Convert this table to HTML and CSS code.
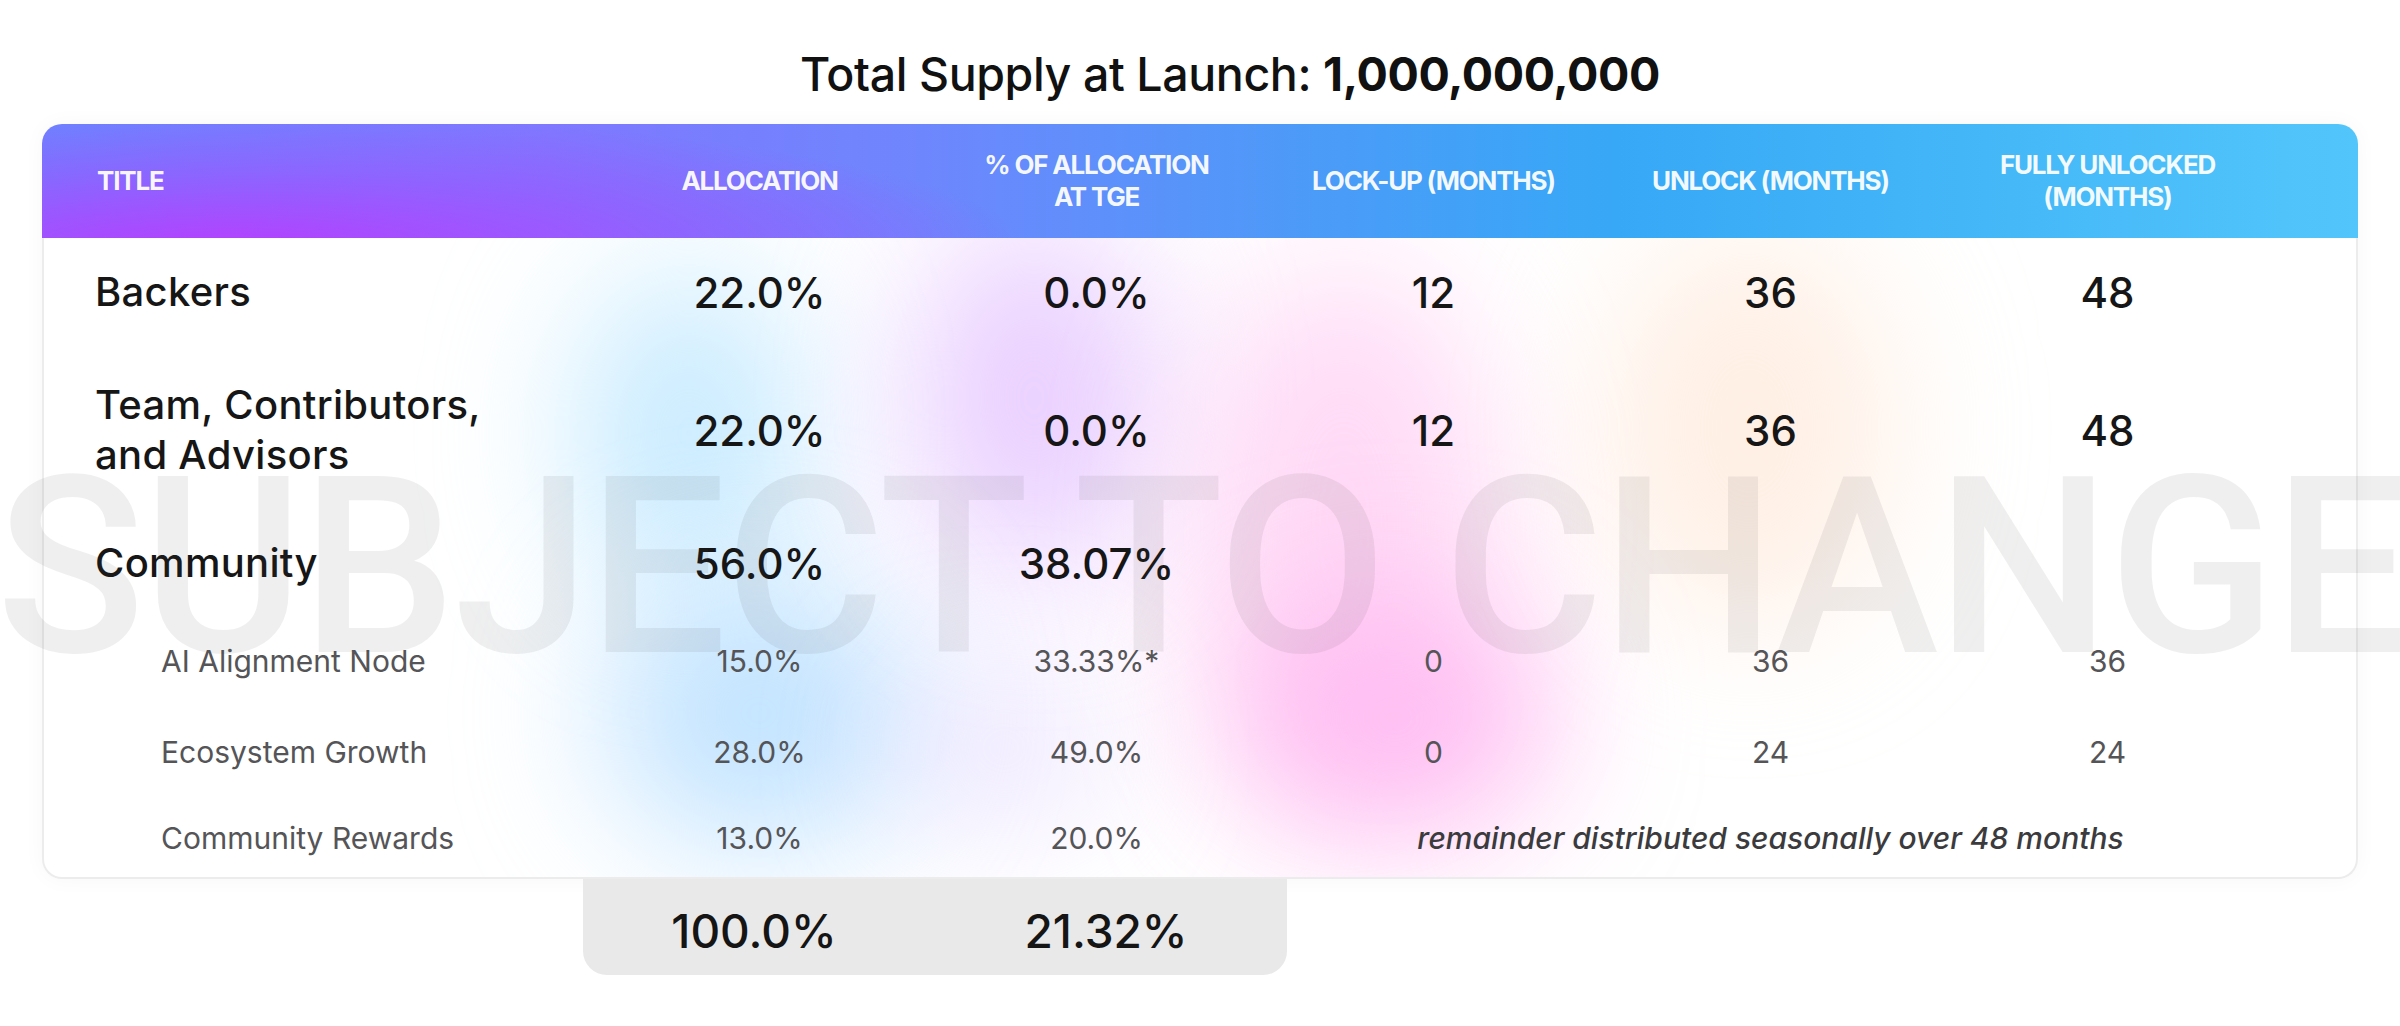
FILE: index.html
```html
<!DOCTYPE html>
<html lang="en">
<head>
<meta charset="utf-8">
<title>Total Supply at Launch</title>
<link rel="stylesheet" href="styles.css">
</head>
<body>
<div class="page">
  <h1 class="headline">Total Supply at Launch: <strong>1,000,000,000</strong></h1>

  <div class="card">
    <div class="row head">
      <div class="cell first">TITLE</div>
      <div class="cell">ALLOCATION</div>
      <div class="cell">% OF ALLOCATION<br>AT TGE</div>
      <div class="cell">LOCK-UP (MONTHS)</div>
      <div class="cell">UNLOCK (MONTHS)</div>
      <div class="cell">FULLY UNLOCKED<br>(MONTHS)</div>
    </div>

    <div class="tbody">
      <div class="blobs" aria-hidden="true">
        <span class="blob b-blue1"></span>
        <span class="blob b-blue2"></span>
        <span class="blob b-purple1"></span>
        <span class="blob b-purple2"></span>
        <span class="blob b-pink1"></span>
        <span class="blob b-pink2"></span>
        <span class="blob b-peach1"></span>
      </div>

      <div class="row main r-backers">
        <div class="cell first">Backers</div>
        <div class="cell">22.0%</div>
        <div class="cell">0.0%</div>
        <div class="cell">12</div>
        <div class="cell">36</div>
        <div class="cell">48</div>
      </div>
      <div class="row main r-team">
        <div class="cell first">Team, Contributors,<br>and Advisors</div>
        <div class="cell">22.0%</div>
        <div class="cell">0.0%</div>
        <div class="cell">12</div>
        <div class="cell">36</div>
        <div class="cell">48</div>
      </div>
      <div class="row main r-community">
        <div class="cell first">Community</div>
        <div class="cell">56.0%</div>
        <div class="cell">38.07%</div>
        <div class="cell"></div>
        <div class="cell"></div>
        <div class="cell"></div>
      </div>
      <div class="row sub r-ai">
        <div class="cell first">AI Alignment Node</div>
        <div class="cell">15.0%</div>
        <div class="cell">33.33%*</div>
        <div class="cell">0</div>
        <div class="cell">36</div>
        <div class="cell">36</div>
      </div>
      <div class="row sub r-eco">
        <div class="cell first">Ecosystem Growth</div>
        <div class="cell">28.0%</div>
        <div class="cell">49.0%</div>
        <div class="cell">0</div>
        <div class="cell">24</div>
        <div class="cell">24</div>
      </div>
      <div class="row sub r-rewards">
        <div class="cell first">Community Rewards</div>
        <div class="cell">13.0%</div>
        <div class="cell">20.0%</div>
        <div class="cell note">remainder distributed seasonally over 48 months</div>
      </div>
    </div>
  </div>

  <div class="totals">
    <div class="cell">100.0%</div>
    <div class="cell">21.32%</div>
  </div>

  <div class="watermark" aria-hidden="true">SUBJECT TO CHANGE</div>
</div>
</body>
</html>
```

FILE: styles.css
```css
* { box-sizing: border-box; }

html, body {
  margin: 0;
  padding: 0;
  background: #ffffff;
}

body {
  width: 2400px;
  height: 1026px;
  overflow: hidden;
  font-family: "Inter", "Liberation Sans", sans-serif;
  color: #141414;
}

.page {
  position: relative;
  padding-top: 46px;
}

.headline {
  margin: 0;
  padding-left: 60px;
  height: 56px;
  line-height: 56px;
  text-align: center;
  font-size: 46.5px;
  font-weight: 500;
  letter-spacing: -0.4px;
  color: #111;
}

.headline strong {
  font-weight: 700;
}

.card {
  margin: 22px 42px 0;
  width: 2316px;
  border-radius: 20px;
  box-shadow: 0 0 22px rgba(0, 0, 0, 0.035);
}

.row {
  display: grid;
  grid-template-columns: 549px repeat(5, 337px);
  align-items: center;
}

.cell {
  text-align: center;
}

.cell.first {
  text-align: left;
  padding-left: 53px;
}

/* header */
.head {
  height: 114px;
  border-radius: 20px 20px 0 0;
  color: rgba(255, 255, 255, 0.95);
  font-weight: 700;
  font-size: 26px;
  line-height: 32px;
  letter-spacing: -1.2px;
  background:
    radial-gradient(ellipse 1000px 170px at 8% 110%, rgba(185, 60, 255, 0.95) 0%, rgba(160, 80, 255, 0.55) 45%, rgba(140, 100, 255, 0) 80%),
    linear-gradient(90deg, #6b84ff 0%, #7f78ff 22%, #6e86fd 38%, #4b9bf8 55%, #37a8f6 68%, #45b8f8 85%, #52c6fb 100%);
  position: relative;
  z-index: 2;
}

.head .cell.first {
  padding-left: 55px;
}

/* body */
.tbody {
  position: relative;
  overflow: hidden;
  border: 2px solid #ececec;
  border-top: none;
  border-radius: 0 0 20px 20px;
  background: #ffffff;
}

.tbody .row {
  position: relative;
  z-index: 1;
  grid-template-columns: 547px repeat(5, 337px);
}

.main {
  font-size: 42px;
  font-weight: 500;
  color: #161616;
}

.main .cell.first {
  font-size: 40px;
  line-height: 50px;
  padding-left: 51px;
  letter-spacing: 0.3px;
}

.r-backers { height: 108px; }
.r-team { height: 168px; }
.r-community { height: 98px; }
.r-ai { height: 92px; padding-top: 6px; }
.r-eco { height: 90px; padding-top: 6px; }
.r-rewards { height: 83px; padding-top: 4px; }

.sub {
  font-size: 30px;
  font-weight: 400;
  color: #555558;
}

.sub .cell.first {
  padding-left: 117px;
}

.note {
  grid-column: span 3;
  font-style: italic;
  font-weight: 500;
  color: #3b3b3e;
  letter-spacing: 0;
}

/* soft colour blobs */
.blobs {
  position: absolute;
  inset: 0;
  z-index: 0;
  pointer-events: none;
}

.blob {
  position: absolute;
  border-radius: 50%;
  filter: blur(70px);
}

.b-blue1 { left: 530px; top: 30px; width: 230px; height: 330px; background: rgba(182, 228, 255, 0.75); }
.b-blue2 { left: 560px; top: 340px; width: 310px; height: 270px; background: rgba(182, 222, 255, 0.85); }
.b-purple1 { left: 870px; top: -20px; width: 240px; height: 360px; background: rgba(226, 190, 255, 0.75); }
.b-purple2 { left: 860px; top: 440px; width: 200px; height: 140px; background: rgba(224, 206, 255, 0.6); }
.b-pink1 { left: 1150px; top: 30px; width: 300px; height: 520px; background: rgba(255, 192, 240, 0.6); }
.b-pink2 { left: 1190px; top: 360px; width: 320px; height: 240px; background: rgba(255, 176, 240, 0.8); }
.b-peach1 { left: 1560px; top: -10px; width: 290px; height: 400px; background: rgba(255, 226, 206, 0.55); }

/* totals */
.totals {
  margin-left: 583px;
  width: 704px;
  height: 96px;
  padding-top: 8px;
  display: grid;
  grid-template-columns: 342px 1fr;
  align-items: center;
  background: #e9e9e9;
  border-radius: 0 0 24px 24px;
  font-size: 46px;
  font-weight: 500;
  color: #151515;
}

/* watermark */
.watermark {
  position: absolute;
  left: -4px;
  top: 445px;
  white-space: nowrap;
  font-family: "Roboto", "Liberation Sans", sans-serif;
  font-weight: 500;
  font-size: 246px;
  line-height: 246px;
  letter-spacing: -2.5px;
  color: rgba(70, 70, 70, 0.085);
  z-index: 5;
  pointer-events: none;
}
```
